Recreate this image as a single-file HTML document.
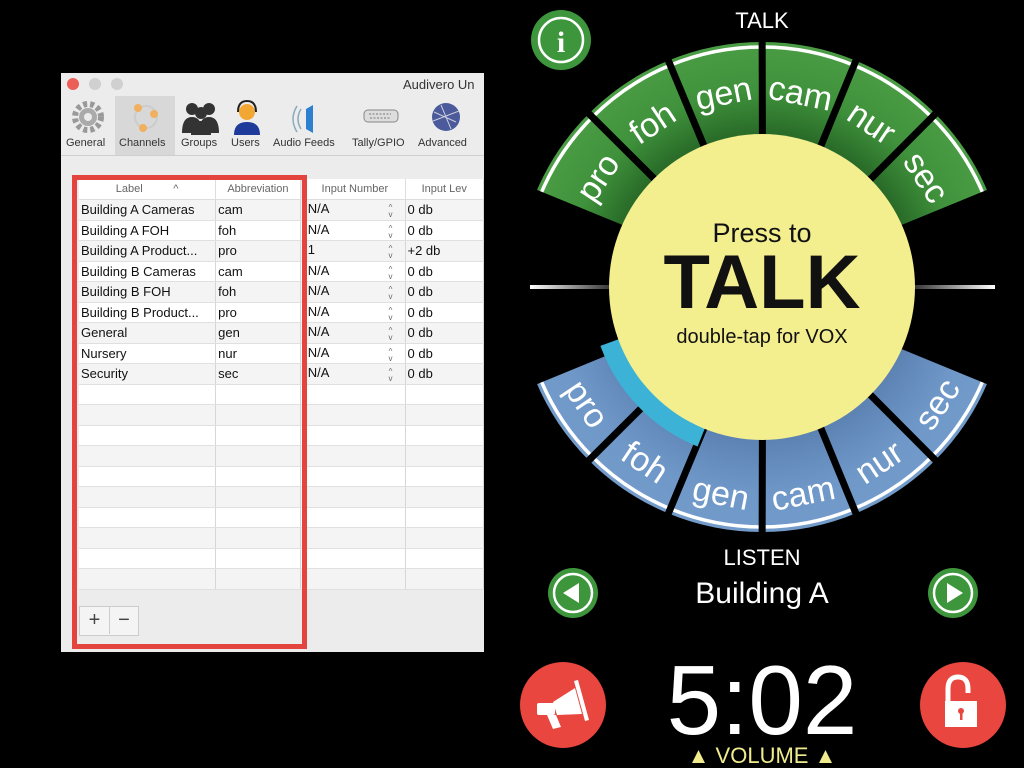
<!DOCTYPE html>
<html><head><meta charset="utf-8"><style>
html,body{margin:0;padding:0;background:#000;width:1024px;height:768px;overflow:hidden;font-family:"Liberation Sans",sans-serif}
#win{position:absolute;left:61px;top:73px;width:423px;height:579px;background:#ececec;overflow:hidden}
.tl{position:absolute;top:5px;width:12px;height:12px;border-radius:50%}
.tb{position:absolute;top:64px;font-size:11px;color:#333}
table{position:absolute;left:18px;top:106px;border-collapse:collapse;font-size:13px;color:#111;background:#fff}
td{height:19.5px;padding:0 2px;border-right:1px solid #d6d6d6;border-bottom:1px solid #e0e0e0;white-space:nowrap;overflow:hidden;vertical-align:middle}
tr:nth-child(even) td{background:#f4f4f4}
th{height:20px;font-weight:normal;font-size:11px;color:#666;background:#fff;border-right:1px solid #ddd;border-bottom:1px solid #ddd;text-align:center;padding:0}
.red{position:absolute;left:11px;top:102px;width:225px;height:464px;border:5px solid #e3453e}
.sp{float:right;color:#666;font-size:8px;line-height:7px;margin:3px 10px 0 0;display:inline-block;text-align:center}
</style></head><body>
<div id="win">
 <div class="tl" style="left:6px;background:#ec5f57"></div>
 <div class="tl" style="left:28px;background:#d0d0d0"></div>
 <div class="tl" style="left:50px;background:#d0d0d0"></div>
 <div style="position:absolute;left:342px;top:4px;font-size:13px;color:#333">Audivero Un</div>
 <div style="position:absolute;left:54px;top:23px;width:60px;height:59px;background:#d8d8d8"></div>
 <div style="position:absolute;left:0;top:82px;width:423px;height:1px;background:#cfcfcf"></div>
 <svg style="position:absolute;left:0;top:24px" width="423" height="40">
  <circle cx="27" cy="20" r="13" fill="none" stroke="#999" stroke-width="6" stroke-dasharray="4 3"/><circle cx="27" cy="20" r="9" fill="#aaa"/><circle cx="27" cy="20" r="4" fill="#ececec"/>
  <circle cx="85" cy="20" r="11" fill="none" stroke="#ccc" stroke-width="2"/><circle cx="77" cy="11" r="4" fill="#f0b060"/><circle cx="93" cy="17" r="4" fill="#f0b060"/><circle cx="82" cy="31" r="4" fill="#f0b060"/>
  <g fill="#333"><circle cx="131" cy="12" r="6"/><path d="M121 36 Q121 20 131 20 Q141 20 141 36Z"/><circle cx="148" cy="12" r="6"/><path d="M138 36 Q138 20 148 20 Q158 20 158 36Z"/><circle cx="140" cy="16" r="6"/><path d="M130 38 Q130 24 140 24 Q150 24 150 38Z"/></g>
  <circle cx="186" cy="15" r="8" fill="#f3a733"/><path d="M173 38 Q173 25 186 25 Q199 25 199 38Z" fill="#1e3a9a"/><path d="M177 15 Q177 4 186 4 Q195 4 195 15" fill="none" stroke="#222" stroke-width="2"/>
  <path d="M245 12 L252 8 L252 36 L245 32Z" fill="#2d7fd0"/><path d="M240 12 Q234 22 240 32 M236 9 Q228 22 236 35" fill="none" stroke="#8ab" stroke-width="1.5"/>
  <rect x="303" y="13" width="34" height="12" rx="4" fill="#ddd" stroke="#888"/><path d="M308 17h22M309 21h20" stroke="#777" stroke-dasharray="2 1.5"/>
  <circle cx="385" cy="20" r="14" fill="#4a5a9a"/><path d="M373 15 L395 25 M380 8 L390 32 M372 24 L398 14" stroke="#ccd" stroke-width="1"/>
 </svg>
 <div class="tb" style="left:5px">General</div>
 <div class="tb" style="left:58px">Channels</div>
 <div class="tb" style="left:120px">Groups</div>
 <div class="tb" style="left:170px">Users</div>
 <div class="tb" style="left:212px">Audio Feeds</div>
 <div class="tb" style="left:291px">Tally/GPIO</div>
 <div class="tb" style="left:357px">Advanced</div>
 <table>
  <tr><th style="width:137px">Label &nbsp; &nbsp; &nbsp; &nbsp; &nbsp;^</th><th style="width:85px">Abbreviation</th><th style="width:4px;border:none;background:#ececec"></th><th style="width:103px">Input Number</th><th style="width:80px">Input Lev</th></tr>
  <tr><td>Building A Cameras</td><td>cam</td><td></td><td>N/A<span class="sp">^<br>v</span></td><td>0 db</td></tr>
  <tr><td>Building A FOH</td><td>foh</td><td></td><td>N/A<span class="sp">^<br>v</span></td><td>0 db</td></tr>
  <tr><td>Building A Product...</td><td>pro</td><td></td><td>1<span class="sp">^<br>v</span></td><td>+2 db</td></tr>
  <tr><td>Building B Cameras</td><td>cam</td><td></td><td>N/A<span class="sp">^<br>v</span></td><td>0 db</td></tr>
  <tr><td>Building B FOH</td><td>foh</td><td></td><td>N/A<span class="sp">^<br>v</span></td><td>0 db</td></tr>
  <tr><td>Building B Product...</td><td>pro</td><td></td><td>N/A<span class="sp">^<br>v</span></td><td>0 db</td></tr>
  <tr><td>General</td><td>gen</td><td></td><td>N/A<span class="sp">^<br>v</span></td><td>0 db</td></tr>
  <tr><td>Nursery</td><td>nur</td><td></td><td>N/A<span class="sp">^<br>v</span></td><td>0 db</td></tr>
  <tr><td>Security</td><td>sec</td><td></td><td>N/A<span class="sp">^<br>v</span></td><td>0 db</td></tr>
  <tr><td></td><td></td><td></td><td></td><td></td></tr>
  <tr><td></td><td></td><td></td><td></td><td></td></tr>
  <tr><td></td><td></td><td></td><td></td><td></td></tr>
  <tr><td></td><td></td><td></td><td></td><td></td></tr>
  <tr><td></td><td></td><td></td><td></td><td></td></tr>
  <tr><td></td><td></td><td></td><td></td><td></td></tr>
  <tr><td></td><td></td><td></td><td></td><td></td></tr>
  <tr><td></td><td></td><td></td><td></td><td></td></tr>
  <tr><td></td><td></td><td></td><td></td><td></td></tr>
  <tr><td></td><td></td><td></td><td></td><td></td></tr>
 </table>
 <div style="position:absolute;left:18px;top:533px;width:58px;height:28px;border:1px solid #ccc;background:#f4f4f4;font-size:20px;color:#444;line-height:27px"><span style="display:inline-block;width:29px;text-align:center;border-right:1px solid #ccc">+</span><span style="display:inline-block;width:28px;text-align:center">−</span></div>
 <div class="red"></div>
</div>

<svg style="position:absolute;left:0;top:0" width="1024" height="768">
 <defs>
  <radialGradient id="gg" gradientUnits="userSpaceOnUse" cx="0" cy="0" r="245"><stop offset="0.55" stop-color="#1f5a20"/><stop offset="0.8" stop-color="#3f913b"/><stop offset="1" stop-color="#4a9d44"/></radialGradient>
  <radialGradient id="bg" gradientUnits="userSpaceOnUse" cx="0" cy="0" r="245"><stop offset="0.6" stop-color="#5a80b0"/><stop offset="0.85" stop-color="#6f98c8"/><stop offset="1" stop-color="#729bca"/></radialGradient>
  <linearGradient id="hl" x1="0" x2="1"><stop offset="0" stop-color="#fff"/><stop offset="1" stop-color="#333"/></linearGradient>
  <linearGradient id="hr" x1="1" x2="0"><stop offset="0" stop-color="#fff"/><stop offset="1" stop-color="#333"/></linearGradient>
  <path id="seg" d="M-47.8,-240.3 A245,245 0 0 1 47.8,-240.3 L27.3,-137.3 A140,140 0 0 0 -27.3,-137.3 Z"/>
  <path id="wa" d="M-46.8,-235.4 A240,240 0 0 1 46.8,-235.4" fill="none" stroke="#fff" stroke-width="3.5"/>
  <line id="sep" x1="-25" y1="-128" x2="-50" y2="-252" stroke="#000" stroke-width="7"/>
  <g id="gs"><use href="#seg" fill="url(#gg)"/><use href="#wa"/><use href="#sep"/></g>
  <g id="bs"><use href="#seg" fill="url(#bg)"/><use href="#wa"/><use href="#sep"/></g>
 </defs>
 <rect x="530" y="285" width="82" height="4" fill="url(#hl)"/>
 <rect x="913" y="285" width="82" height="4" fill="url(#hr)"/>
 <g transform="translate(762,287)" font-size="34" fill="#fff" text-anchor="middle">
  <g transform="rotate(-56.25)"><use href="#gs"/><text y="-186">pro</text></g>
  <g transform="rotate(-33.75)"><use href="#gs"/><text y="-186">foh</text></g>
  <g transform="rotate(-11.25)"><use href="#gs"/><text y="-186">gen</text></g>
  <g transform="rotate(11.25)"><use href="#gs"/><text y="-186">cam</text></g>
  <g transform="rotate(33.75)"><use href="#gs"/><text y="-186">nur</text></g>
  <g transform="rotate(56.25)"><use href="#gs"/><use href="#sep" transform="scale(-1,1)"/><text y="-186">sec</text></g>
  <g transform="rotate(56.25)"><g transform="scale(1,-1)"><use href="#bs"/></g><text y="222">pro</text></g>
  <g transform="rotate(33.75)"><g transform="scale(1,-1)"><use href="#bs"/></g><text y="222">foh</text></g>
  <g transform="rotate(11.25)"><g transform="scale(1,-1)"><use href="#bs"/></g><text y="222">gen</text></g>
  <g transform="rotate(-11.25)"><g transform="scale(1,-1)"><use href="#bs"/></g><text y="222">cam</text></g>
  <g transform="rotate(-33.75)"><g transform="scale(1,-1)"><use href="#bs"/></g><text y="222">nur</text></g>
  <g transform="rotate(-56.25)"><g transform="scale(1,-1)"><use href="#bs"/><use href="#sep" transform="scale(-1,1)"/></g><text y="222">sec</text></g>
  <path d="M-152.2,55.4 A162,162 0 0 0 -60.7,150.2" fill="none" stroke="#3cb3d6" stroke-width="20"/>
  <circle r="153" fill="#f3ee8e"/>
 </g>
 <g fill="#111" text-anchor="middle" font-family="Liberation Sans,sans-serif">
  <text x="762" y="242" font-size="27">Press to</text>
  <text x="762" y="308" font-size="76" font-weight="bold">TALK</text>
  <text x="762" y="343" font-size="20">double-tap for VOX</text>
 </g>
 <g fill="#fff" text-anchor="middle">
  <text x="762" y="28" font-size="22">TALK</text>
  <text x="762" y="565" font-size="22">LISTEN</text>
  <text x="762" y="603" font-size="30">Building A</text>
  <text x="762" y="734" font-size="98">5:02</text>
  <text x="762" y="763" font-size="22" fill="#f0ec8e">▲ VOLUME ▲</text>
 </g>
 <circle cx="561" cy="40" r="30" fill="#3d963b"/><circle cx="561" cy="40" r="22" fill="none" stroke="#fff" stroke-width="2.5"/>
 <text x="561" y="52" font-size="30" font-family="Liberation Serif,serif" font-weight="bold" fill="#fff" text-anchor="middle">i</text>
 <circle cx="573" cy="593" r="25" fill="#3d963b"/><circle cx="573" cy="593" r="19" fill="none" stroke="#fff" stroke-width="2.5"/><path d="M563 593 L579 583 L579 603Z" fill="#fff"/>
 <circle cx="953" cy="593" r="25" fill="#3d963b"/><circle cx="953" cy="593" r="19" fill="none" stroke="#fff" stroke-width="2.5"/><path d="M963 593 L947 583 L947 603Z" fill="#fff"/>
 <circle cx="563" cy="705" r="43" fill="#e8463f"/>
 <g fill="#fff"><path d="M553 702 L575 688 L582 714 L557 715Z"/><rect x="537" y="703" width="18" height="12" rx="2"/><path d="M547 715 L556 715 L561 727 L553 729Z"/><path d="M574 681 L578 680 L589 720 L585 721Z"/></g>
 <circle cx="963" cy="705" r="43" fill="#e8463f"/>
 <rect x="945" y="701" width="32" height="26" fill="#fff"/><path d="M948 701 V689 Q948 677 958 677 Q968 677 968 689 V693" fill="none" stroke="#fff" stroke-width="5"/>
 <circle cx="961" cy="711" r="3" fill="#e8463f"/><rect x="960" y="712" width="2.5" height="8" fill="#e8463f"/>
</svg>
</body></html>
